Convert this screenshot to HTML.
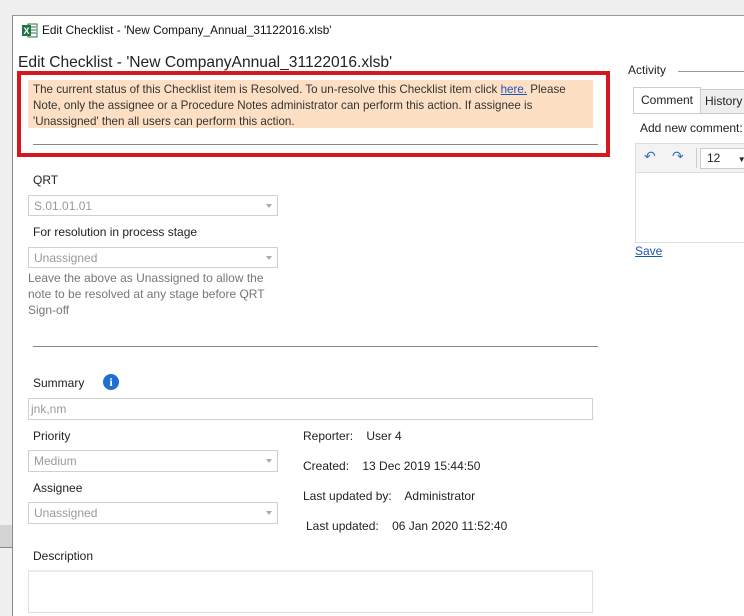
<!DOCTYPE html>
<html><head><meta charset="utf-8"><style>
body{margin:0;width:744px;height:597px;background:#f0f0f0;position:relative;overflow:hidden;font-family:"Liberation Sans",sans-serif;font-size:12px;color:#222}
.a{position:absolute;white-space:nowrap}
.win{position:absolute;left:12px;top:15px;width:740px;height:600px;background:#fff;border-left:1px solid #888;border-top:1px solid #999}
.sel{position:absolute;border:1px solid #d0d0d0;background:#fff;color:#999;box-sizing:border-box;padding:3px 5px;font-size:12px}
.sel:after{content:"";position:absolute;right:5px;top:8px;border-left:3px solid transparent;border-right:3px solid transparent;border-top:4px solid #aaa}
.sel.n:after{display:none}
.hr{position:absolute;height:1px;background:#888}
</style></head><body>
<div class="a" style="left:0;top:525px;width:12px;height:22px;background:#d4d4d4;border-bottom:1px solid #888"></div>
<div class="win"></div>
<svg class="a" style="left:22px;top:23px" width="16" height="15" viewBox="0 0 16 15"><rect x="6" y="1" width="9" height="13" fill="#fff" stroke="#217346"/><line x1="9" y1="4" x2="14" y2="4" stroke="#217346"/><line x1="9" y1="7" x2="14" y2="7" stroke="#217346"/><line x1="9" y1="10" x2="14" y2="10" stroke="#217346"/><rect x="0" y="2" width="9" height="11" fill="#217346"/><text x="1.5" y="11" font-size="9" font-weight="bold" fill="#fff" font-family="Liberation Sans">X</text></svg>
<div class="a" style="left:42px;top:23px;font-size:11.8px;color:#111">Edit Checklist - 'New Company_Annual_31122016.xlsb'</div>
<div class="a" style="left:18px;top:54px;font-size:15.6px;color:#222">Edit Checklist - 'New CompanyAnnual_31122016.xlsb'</div>
<div class="a" style="left:28px;top:80px;width:565px;height:48px;background:#fde0c4"></div>
<div class="a" style="left:33px;top:82px;font-size:11.6px;line-height:16px;color:#333;white-space:normal;width:560px">The current status of this Checklist item is Resolved. To un-resolve this Checklist item click <span style="color:#1a56b8;text-decoration:underline">here.</span> Please Note, only the assignee or a Procedure Notes administrator can perform this action. If assignee is 'Unassigned' then all users can perform this action.</div>
<div class="hr" style="left:33px;top:144px;width:565px"></div>
<div class="a" style="left:17px;top:71px;width:585px;height:78px;border:4px solid #d8161d"></div>
<div class="a" style="left:33px;top:173px">QRT</div>
<div class="sel" style="left:28px;top:195px;width:250px;height:21px">S.01.01.01</div>
<div class="a" style="left:33px;top:225px">For resolution in process stage</div>
<div class="sel" style="left:28px;top:247px;width:250px;height:21px">Unassigned</div>
<div class="a" style="left:28px;top:270px;line-height:16px;color:#777;white-space:normal;width:260px">Leave the above as Unassigned to allow the note to be resolved at any stage before QRT Sign-off</div>
<div class="hr" style="left:33px;top:346px;width:565px"></div>
<div class="a" style="left:33px;top:376px">Summary</div>
<div class="a" style="left:103px;top:374px;width:16px;height:16px;border-radius:50%;background:#1f6fd0;color:#fff;font-weight:bold;font-size:12px;text-align:center;line-height:16px;font-family:'Liberation Serif',serif">i</div>
<div class="sel n" style="left:28px;top:398px;width:565px;height:22px;padding-left:2px">jnk,nm</div>
<div class="a" style="left:33px;top:429px">Priority</div>
<div class="sel" style="left:28px;top:450px;width:250px;height:22px">Medium</div>
<div class="a" style="left:33px;top:481px">Assignee</div>
<div class="sel" style="left:28px;top:502px;width:250px;height:22px">Unassigned</div>
<div class="a" style="left:33px;top:549px">Description</div>
<div class="a" style="left:28px;top:570px;width:563px;height:40px;border:1px solid #e0e0e0;border-top:2px solid #ececec"></div>
<div class="a" style="left:303px;top:429px">Reporter:&nbsp;&nbsp;&nbsp; User 4</div>
<div class="a" style="left:303px;top:459px">Created:&nbsp;&nbsp;&nbsp; 13 Dec 2019 15:44:50</div>
<div class="a" style="left:303px;top:489px">Last updated by:&nbsp;&nbsp;&nbsp; Administrator</div>
<div class="a" style="left:306px;top:519px">Last updated:&nbsp;&nbsp;&nbsp; 06 Jan 2020 11:52:40</div>
<div class="a" style="left:628px;top:63px">Activity</div>
<div class="hr" style="left:678px;top:71px;width:70px;background:#999"></div>
<div class="a" style="left:633px;top:87px;width:66px;height:26px;border:1px solid #ccc;border-bottom:none;background:#fff;text-align:center;line-height:24px">Comment</div>
<div class="a" style="left:700px;top:89px;width:50px;height:23px;border:1px solid #ccc;background:#eee;line-height:22px;padding-left:4px">History</div>
<div class="hr" style="left:633px;top:113px;width:120px;background:#ccc"></div>
<div class="a" style="left:640px;top:121px">Add new comment:</div>
<div class="a" style="left:635px;top:143px;width:115px;height:98px;border:1px solid #ddd"></div>
<div class="a" style="left:636px;top:144px;width:114px;height:28px;background:#f3f3f3;border-bottom:1px solid #ddd"></div>
<div class="a" style="left:644px;top:148px;color:#3a6fc4;font-size:14px">↶</div>
<div class="a" style="left:672px;top:148px;color:#3a6fc4;font-size:14px">↷</div>
<div class="a" style="left:696px;top:148px;width:1px;height:20px;background:#ccc"></div>
<div class="a" style="left:700px;top:148px;width:50px;height:19px;border:1px solid #ccc;background:#fff;padding-left:6px;line-height:19px">12 <span style="margin-left:14px;font-size:8px">▼</span></div>
<div class="a" style="left:635px;top:244px;color:#1a56b8;text-decoration:underline">Save</div>
</body></html>
